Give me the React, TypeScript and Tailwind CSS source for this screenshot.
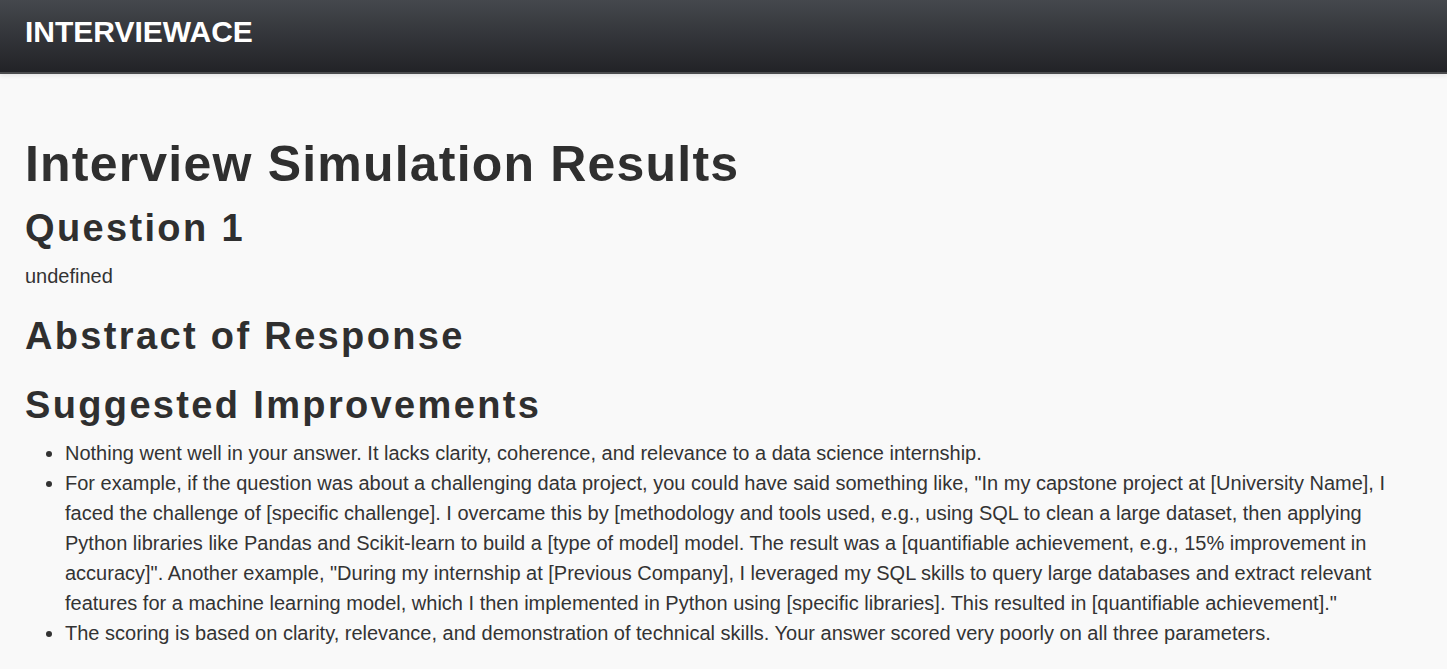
export default function App() {
  const improvements = [
    'Nothing went well in your answer. It lacks clarity, coherence, and relevance to a data science internship.',
    'For example, if the question was about a challenging data project, you could have said something like, "In my capstone project at [University Name], I faced the challenge of [specific challenge]. I overcame this by [methodology and tools used, e.g., using SQL to clean a large dataset, then applying Python libraries like Pandas and Scikit-learn to build a [type of model] model. The result was a [quantifiable achievement, e.g., 15% improvement in accuracy]". Another example, "During my internship at [Previous Company], I leveraged my SQL skills to query large databases and extract relevant features for a machine learning model, which I then implemented in Python using [specific libraries]. This resulted in [quantifiable achievement]."',
    'The scoring is based on clarity, relevance, and demonstration of technical skills. Your answer scored very poorly on all three parameters.',
  ];

  return (
    <div className="min-h-screen bg-[#f9f9f9] font-['Liberation_Sans',Arial,sans-serif] text-[#333]">
      <header className="flex h-[74px] items-center border-b-2 border-[#4b4c4e] bg-gradient-to-b from-[#45484d] to-[#222327] px-[25px] shadow-[0_2px_4px_rgba(0,0,0,0.08)]">
        <div className="pb-[8px] text-[30px] font-bold leading-none text-white">INTERVIEWACE</div>
      </header>

      <main className="px-[25px]">
        <h1 className="mt-[60px] text-[50px] font-bold leading-[60px] tracking-[1.2px] text-[#2f2f2f]">
          Interview Simulation Results
        </h1>
        <h2 className="mt-[11px] text-[38px] font-bold leading-[46px] tracking-[2.35px] text-[#2f2f2f]">
          Question 1
        </h2>
        <p className="mt-[10px] text-[20px] leading-[30px]">undefined</p>
        <h2 className="mt-[22px] text-[38px] font-bold leading-[46px] tracking-[2.35px] text-[#2f2f2f]">
          Abstract of Response
        </h2>
        <h2 className="mt-[23px] text-[38px] font-bold leading-[46px] tracking-[2.35px] text-[#2f2f2f]">
          Suggested Improvements
        </h2>
        <ul className="mt-[10px] list-disc pl-[40px] text-[20px] leading-[30px]">
          {improvements.map((item, i) => (
            <li key={i}>{item}</li>
          ))}
        </ul>
      </main>
    </div>
  );
}
